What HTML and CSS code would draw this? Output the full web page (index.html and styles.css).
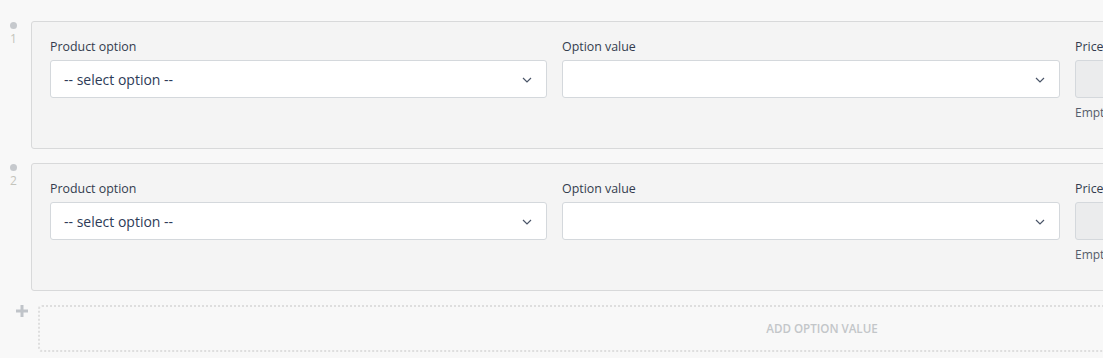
FILE: index.html
```html
<!DOCTYPE html>
<html lang="en">
<head>
    <meta charset="UTF-8">
    <meta name="viewport" content="width=device-width, initial-scale=1.0">
    <title>Product options</title>
    <link rel="stylesheet" href="styles.css">
</head>
<body>
    <div class="option-list">
        <div class="option-row">
            <div class="row-index">
                <span class="row-dot"></span>
                <span class="row-number">1</span>
            </div>
            <div class="option-card">
                <div class="field-grid">
                    <div class="form-group">
                        <label>Product option</label>
                        <div class="select-box">
                            <span>-- select option --</span>
                            <svg class="chevron" width="10" height="6" viewBox="0 0 10 6"><path d="M1 1l4 4 4-4" fill="none" stroke="#4a5568" stroke-width="1.2"/></svg>
                        </div>
                    </div>
                    <div class="form-group">
                        <label>Option value</label>
                        <div class="select-box">
                            <span></span>
                            <svg class="chevron" width="10" height="6" viewBox="0 0 10 6"><path d="M1 1l4 4 4-4" fill="none" stroke="#4a5568" stroke-width="1.2"/></svg>
                        </div>
                    </div>
                    <div class="form-group">
                        <label>Price</label>
                        <div class="input-box disabled"></div>
                        <p class="help-text">Empty</p>
                    </div>
                </div>
            </div>
        </div>

        <div class="option-row">
            <div class="row-index">
                <span class="row-dot"></span>
                <span class="row-number">2</span>
            </div>
            <div class="option-card">
                <div class="field-grid">
                    <div class="form-group">
                        <label>Product option</label>
                        <div class="select-box">
                            <span>-- select option --</span>
                            <svg class="chevron" width="10" height="6" viewBox="0 0 10 6"><path d="M1 1l4 4 4-4" fill="none" stroke="#4a5568" stroke-width="1.2"/></svg>
                        </div>
                    </div>
                    <div class="form-group">
                        <label>Option value</label>
                        <div class="select-box">
                            <span></span>
                            <svg class="chevron" width="10" height="6" viewBox="0 0 10 6"><path d="M1 1l4 4 4-4" fill="none" stroke="#4a5568" stroke-width="1.2"/></svg>
                        </div>
                    </div>
                    <div class="form-group">
                        <label>Price</label>
                        <div class="input-box disabled"></div>
                        <p class="help-text">Empty</p>
                    </div>
                </div>
            </div>
        </div>

        <div class="add-row">
            <div class="add-icon">
                <svg width="12" height="12" viewBox="0 0 12 12"><path d="M6 0v12M0 6h12" stroke="#c0c4c9" stroke-width="3"/></svg>
            </div>
            <div class="add-box">ADD OPTION VALUE</div>
        </div>
    </div>
</body>
</html>
```

FILE: styles.css
```css
* {
    box-sizing: border-box;
    margin: 0;
    padding: 0;
}

body {
    font-family: 'Open Sans', 'Noto Sans', sans-serif;
    background: #f8f8f8;
    color: #333c4e;
    overflow: hidden;
}

.option-list {
    width: 1606px;
    padding-top: 21px;
}

.option-row {
    display: flex;
    margin-bottom: 14px;
}

.row-index {
    width: 31px;
    display: flex;
    flex-direction: column;
    align-items: center;
    padding-right: 4px;
}

.row-dot {
    width: 7px;
    height: 7px;
    border-radius: 50%;
    background: #c6c9cd;
    margin-top: 1px;
}

.row-number {
    font-size: 12px;
    color: #c4c4bc;
    line-height: 16px;
    margin-top: 2px;
}

.option-card {
    flex: 1;
    background: #f4f4f4;
    border: 1px solid #d8d9da;
    border-radius: 3px;
    padding: 16px 18px 28px;
}

.field-grid {
    display: grid;
    grid-template-columns: 497px 498px 1fr;
    gap: 15px;
}

.form-group label {
    display: block;
    font-size: 12.4px;
    line-height: 17px;
    color: #333c4e;
    margin-bottom: 5px;
}

.select-box {
    height: 38px;
    background: #fff;
    border: 1px solid #d4d8dc;
    border-radius: 3px;
    display: flex;
    align-items: center;
    justify-content: space-between;
    padding: 0 14px 0 13px;
    font-size: 14px;
    color: #2d3b57;
}

.chevron {
    margin-top: 1px;
}

.input-box {
    height: 38px;
    border: 1px solid #d4d8dc;
    border-radius: 3px;
}

.input-box.disabled {
    background: #ebeced;
}

.help-text {
    font-size: 12px;
    line-height: 15px;
    color: #555c6b;
    margin-top: 7px;
}

.add-row {
    display: flex;
    margin-top: -9px;
}

.add-icon {
    width: 38px;
    padding-left: 16px;
    padding-top: 4px;
}

.add-box {
    flex: 1;
    height: 47px;
    margin-top: 9px;
    border: 2px dotted #dedede;
    border-radius: 4px;
    display: flex;
    align-items: center;
    justify-content: center;
    font-size: 11.6px;
    font-weight: 600;
    color: #c3c6c9;
}
```
